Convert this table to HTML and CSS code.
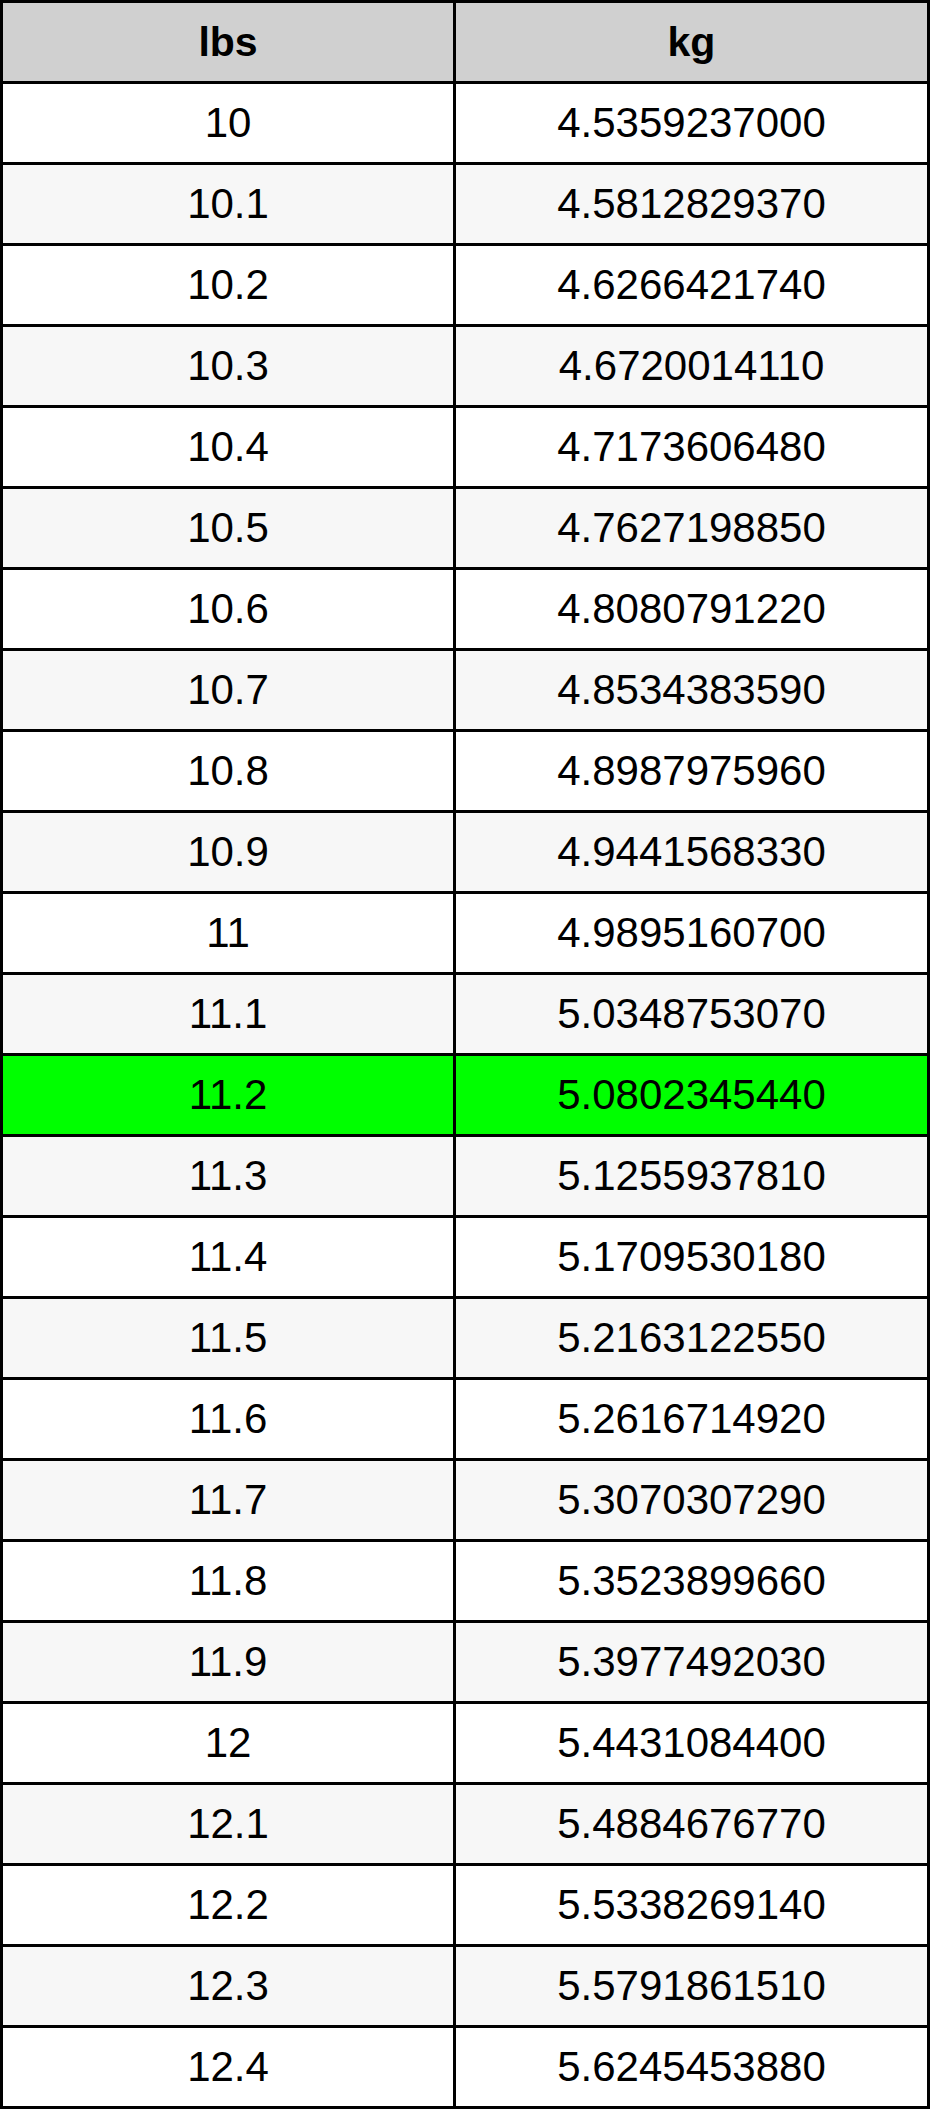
FILE: index.html
```html
<!DOCTYPE html>
<html>
<head>
<meta charset="utf-8">
<link rel="stylesheet" href="styles.css">
</head>
<body>
<table class="conv">
<colgroup><col class="c1"><col class="c2"></colgroup>
<thead>
<tr><th>lbs</th><th>kg</th></tr>
</thead>
<tbody>
<tr><td>10</td><td>4.5359237000</td></tr>
<tr class="alt"><td>10.1</td><td>4.5812829370</td></tr>
<tr><td>10.2</td><td>4.6266421740</td></tr>
<tr class="alt"><td>10.3</td><td>4.6720014110</td></tr>
<tr><td>10.4</td><td>4.7173606480</td></tr>
<tr class="alt"><td>10.5</td><td>4.7627198850</td></tr>
<tr><td>10.6</td><td>4.8080791220</td></tr>
<tr class="alt"><td>10.7</td><td>4.8534383590</td></tr>
<tr><td>10.8</td><td>4.8987975960</td></tr>
<tr class="alt"><td>10.9</td><td>4.9441568330</td></tr>
<tr><td>11</td><td>4.9895160700</td></tr>
<tr class="alt"><td>11.1</td><td>5.0348753070</td></tr>
<tr class="hl"><td>11.2</td><td>5.0802345440</td></tr>
<tr class="alt"><td>11.3</td><td>5.1255937810</td></tr>
<tr><td>11.4</td><td>5.1709530180</td></tr>
<tr class="alt"><td>11.5</td><td>5.2163122550</td></tr>
<tr><td>11.6</td><td>5.2616714920</td></tr>
<tr class="alt"><td>11.7</td><td>5.3070307290</td></tr>
<tr><td>11.8</td><td>5.3523899660</td></tr>
<tr class="alt"><td>11.9</td><td>5.3977492030</td></tr>
<tr><td>12</td><td>5.4431084400</td></tr>
<tr class="alt"><td>12.1</td><td>5.4884676770</td></tr>
<tr><td>12.2</td><td>5.5338269140</td></tr>
<tr class="alt"><td>12.3</td><td>5.5791861510</td></tr>
<tr><td>12.4</td><td>5.6245453880</td></tr>
</tbody>
</table>
</body>
</html>
```
FILE: styles.css
```css
html, body {
  margin: 0;
  padding: 0;
  background: #ffffff;
}
.conv {
  width: 930px;
  table-layout: fixed;
  border-collapse: separate;
  border-spacing: 0;
  border-top: 3px solid #000;
  border-left: 3px solid #000;
  font-family: "Liberation Sans", Arial, sans-serif;
  color: #000;
}
.c1 { width: 453px; }
.c2 { width: 474px; }
.conv tr { height: 81px; }
.conv th, .conv td {
  box-sizing: border-box;
  padding: 0;
  border-right: 3px solid #000;
  border-bottom: 3px solid #000;
  text-align: center;
  vertical-align: middle;
  white-space: nowrap;
}
.conv th {
  background: #d0d0d0;
  font-weight: bold;
  font-size: 41px;
}
.conv td {
  background: #ffffff;
  font-size: 42px;
}
.conv tr.alt td { background: #f7f7f7; }
.conv tr.hl td { background: #00ff00; }
```
